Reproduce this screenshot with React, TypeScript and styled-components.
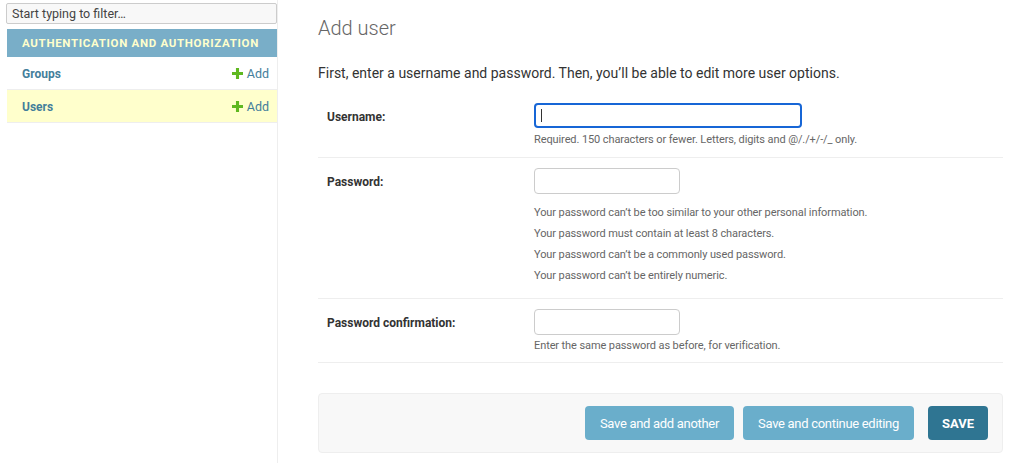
import React from "react";
import styled, { createGlobalStyle } from "styled-components";

const GlobalStyle = createGlobalStyle`
  html, body {
    margin: 0;
    padding: 0;
    background: #fff;
    font-family: Roboto, "Liberation Sans", Arial, sans-serif;
    color: #333;
  }
  * {
    box-sizing: border-box;
  }
`;

const Page = styled.div`
  display: flex;
  width: 1024px;
  height: 463px;
  overflow: hidden;
`;

const Sidebar = styled.nav`
  width: 278px;
  flex-shrink: 0;
  padding: 3px 0 0 6px;
  border-right: 1px solid #eee;
  height: 100%;
`;

const Filter = styled.input`
  display: block;
  width: 271px;
  height: 21px;
  margin: 0 0 5px 0;
  padding: 2px 5px;
  border: 1px solid #ccc;
  border-radius: 2px;
  background: #f8f8f8;
  font-family: Roboto, "Liberation Sans", Arial, sans-serif;
  font-size: 12.5px;
  color: #333;
  outline: none;

  &::placeholder {
    color: #444;
  }
`;

const Module = styled.div`
  margin-left: 1px;
`;

const Caption = styled.div`
  height: 28px;
  display: flex;
  align-items: center;
  padding-left: 15px;
  background: #79aec8;
  color: #ffc;
  font-size: 11.5px;
  font-weight: 700;
  letter-spacing: 0.68px;
  text-transform: uppercase;
`;

const ModelRow = styled.div<{ $current?: boolean }>`
  display: flex;
  align-items: center;
  justify-content: space-between;
  height: 33px;
  padding: 1px 8px 0 15px;
  border-bottom: 1px solid #eee;
  background: ${(p) => (p.$current ? "#ffffcc" : "#fff")};
`;

const ModelLink = styled.a`
  color: #447e9b;
  font-size: 12px;
  font-weight: 700;
  text-decoration: none;
`;

const AddLink = styled.a`
  display: flex;
  align-items: center;
  gap: 4px;
  color: #447e9b;
  font-size: 12.5px;
  text-decoration: none;
`;

const Plus = () => (
  <svg width="11" height="11" viewBox="0 0 10 10">
    <path d="M3.6 0h2.8v3.6H10v2.8H6.4V10H3.6V6.4H0V3.6h3.6z" fill="#5fb820" />
  </svg>
);

const Main = styled.main`
  flex: 1;
  padding: 16px 21px 0 40px;
`;

const Title = styled.h1`
  margin: 0;
  font-size: 20px;
  line-height: 24px;
  font-weight: 300;
  color: #666;
`;

const Intro = styled.p`
  margin: 23px 0 10px;
  font-size: 14px;
  line-height: 20px;
  color: #333;
`;

const FormRow = styled.div`
  display: flex;
  padding: 10px 9px;
  border-bottom: 1px solid #eee;
`;

const Label = styled.label`
  width: 207px;
  flex-shrink: 0;
  padding-top: 7px;
  font-size: 12px;
  font-weight: 700;
  color: #333;
`;

const Field = styled.div`
  display: flex;
  flex-direction: column;
`;

const TextInput = styled.input<{ $wide?: boolean; $focused?: boolean }>`
  width: ${(p) => (p.$wide ? "268px" : "146px")};
  height: ${(p) => (p.$wide ? "25px" : "26px")};
  padding: 2px 6px;
  border: ${(p) => (p.$focused ? "2px solid #1766d6" : "1px solid #ccc")};
  border-radius: 4px;
  font-family: Roboto, "Liberation Sans", Arial, sans-serif;
  font-size: 13px;
  outline: none;
`;

const Caret = styled.span`
  position: absolute;
  left: 7px;
  top: 6px;
  width: 1px;
  height: 13px;
  background: #333;
`;

const InputWrap = styled.div`
  position: relative;
  width: fit-content;
`;

const Help = styled.div<{ $tight?: boolean }>`
  margin-top: ${(p) => (p.$tight ? "4px" : "5px")};
  margin-bottom: ${(p) => (p.$tight ? "-1px" : "0")};
  font-size: 11px;
  line-height: 14px;
  color: #666;
  letter-spacing: -0.1px;
`;

const HelpList = styled.ul`
  list-style: none;
  margin: 8px 0 2px;
  padding: 0;
`;

const HelpItem = styled.li`
  font-size: 11px;
  line-height: 21px;
  color: #666;
  letter-spacing: -0.1px;
`;

const SubmitRow = styled.div`
  display: flex;
  justify-content: flex-end;
  align-items: center;
  margin-top: 30px;
  height: 60px;
  padding: 0 14px;
  background: #f8f8f8;
  border: 1px solid #eee;
  border-radius: 4px;
`;

const Button = styled.button<{ $primary?: boolean }>`
  height: 34px;
  padding: 0 ${(p) => (p.$primary ? "14px" : "15px")};
  margin-left: ${(p) => (p.$primary ? "14px" : "9px")};
  border: none;
  border-radius: 4px;
  background: ${(p) => (p.$primary ? "#2f7592" : "#6aaecb")};
  color: #fff;
  font-family: Roboto, "Liberation Sans", Arial, sans-serif;
  font-size: 13px;
  letter-spacing: ${(p) => (p.$primary ? "0" : "-0.3px")};
  font-weight: ${(p) => (p.$primary ? 700 : 400)};
  text-transform: ${(p) => (p.$primary ? "uppercase" : "none")};
  cursor: pointer;
`;

const models = [
  { name: "Groups", current: false },
  { name: "Users", current: true },
];

const passwordHelp = [
  "Your password can\u2019t be too similar to your other personal information.",
  "Your password must contain at least 8 characters.",
  "Your password can\u2019t be a commonly used password.",
  "Your password can\u2019t be entirely numeric.",
];

const App = () => {
  return (
    <>
      <GlobalStyle />
      <Page>
        <Sidebar>
          <Filter placeholder="Start typing to filter…" />
          <Module>
            <Caption>Authentication and Authorization</Caption>
            {models.map((m) => (
              <ModelRow key={m.name} $current={m.current}>
                <ModelLink href="#">{m.name}</ModelLink>
                <AddLink href="#">
                  <Plus />
                  Add
                </AddLink>
              </ModelRow>
            ))}
          </Module>
        </Sidebar>
        <Main>
          <Title>Add user</Title>
          <Intro>First, enter a username and password. Then, you’ll be able to edit more user options.</Intro>
          <FormRow>
            <Label>Username:</Label>
            <Field>
              <InputWrap>
                <TextInput $wide $focused />
                <Caret />
              </InputWrap>
              <Help>Required. 150 characters or fewer. Letters, digits and @/./+/-/_ only.</Help>
            </Field>
          </FormRow>
          <FormRow>
            <Label>Password:</Label>
            <Field>
              <TextInput type="password" />
              <HelpList>
                {passwordHelp.map((t) => (
                  <HelpItem key={t}>{t}</HelpItem>
                ))}
              </HelpList>
            </Field>
          </FormRow>
          <FormRow>
            <Label>Password confirmation:</Label>
            <Field>
              <TextInput type="password" />
              <Help $tight>Enter the same password as before, for verification.</Help>
            </Field>
          </FormRow>
          <SubmitRow>
            <Button>Save and add another</Button>
            <Button>Save and continue editing</Button>
            <Button $primary>Save</Button>
          </SubmitRow>
        </Main>
      </Page>
    </>
  );
};

export default App;
